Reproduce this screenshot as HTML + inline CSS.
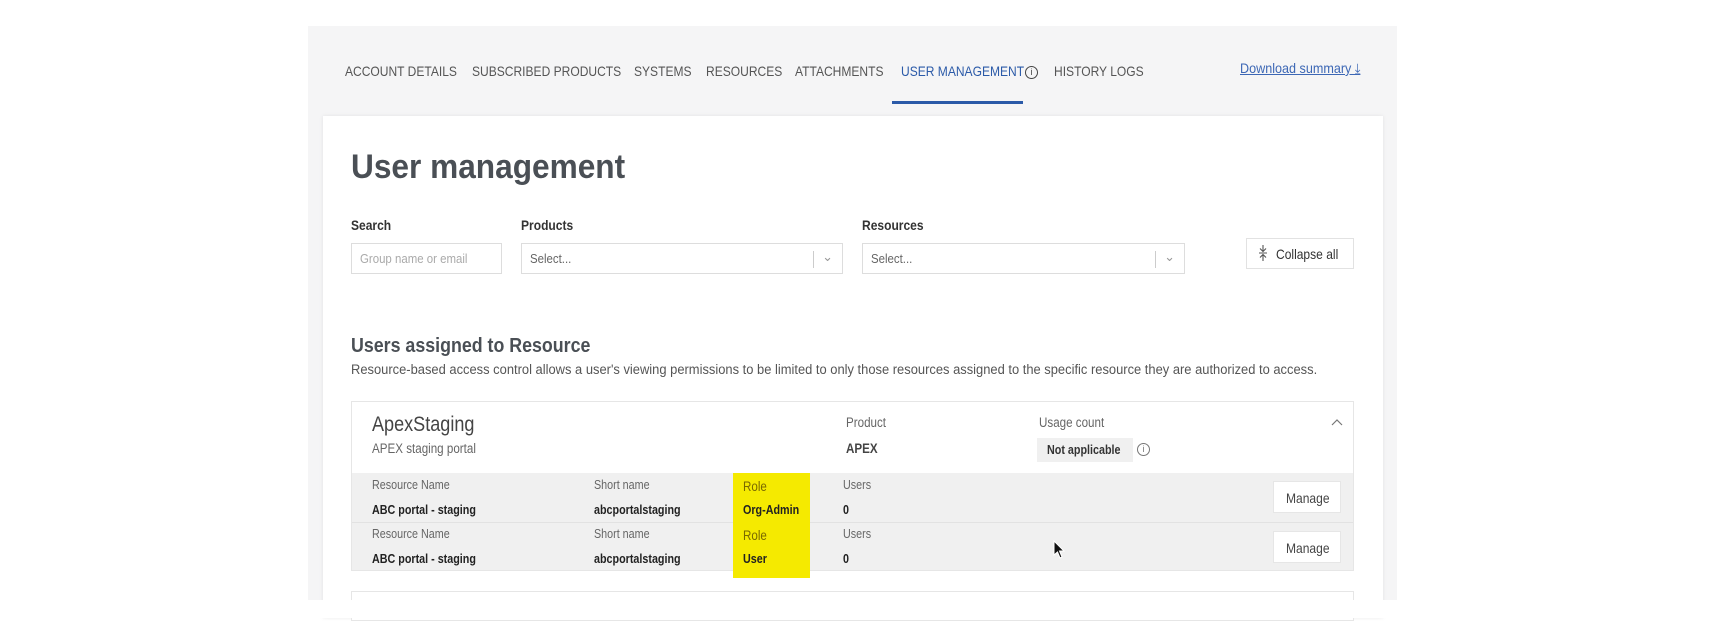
<!DOCTYPE html>
<html><head><meta charset="utf-8"><style>
*{margin:0;padding:0;box-sizing:border-box}
body{width:1716px;height:618px;background:#fff;font-family:"Liberation Sans",sans-serif;color:#333;position:relative;overflow:hidden}
.a{position:absolute;white-space:nowrap}
.n{transform:scaleX(.86);transform-origin:0 0}
.panel{left:308px;top:26px;width:1089px;height:574px;background:#f5f5f6}
.tab{top:63px;font-size:14px;color:#555}
.card{left:323px;top:116px;width:1060px;height:502px;background:#fff;box-shadow:0 0 4px rgba(0,0,0,.08)}
.lbl{font-size:14px;font-weight:bold;color:#333;top:217px}
.inp{top:243px;height:31px;border:1px solid #ddd;background:#fff;font-size:13px;color:#666}
.inp .t{position:absolute;left:8px;top:7px;transform:scaleX(.88);transform-origin:0 0}
.sm{font-size:12.5px;color:#666}
.v{font-size:12.5px;font-weight:bold;color:#222}
</style></head><body>
<div class="a panel"></div>
<div class="a tab n" style="left:345px">ACCOUNT DETAILS</div>
<div class="a tab n" style="left:472px">SUBSCRIBED PRODUCTS</div>
<div class="a tab n" style="left:634px">SYSTEMS</div>
<div class="a tab n" style="left:706px">RESOURCES</div>
<div class="a tab n" style="left:795px">ATTACHMENTS</div>
<div class="a tab n" style="left:901px;color:#2b5aa8">USER MANAGEMENT</div>
<div class="a" style="left:1025px;top:66px;width:13px;height:13px;border:1px solid #444;border-radius:50%;font-size:9px;text-align:center;line-height:11px;color:#444">i</div>
<div class="a tab n" style="left:1054px">HISTORY LOGS</div>
<div class="a" style="left:892px;top:101px;width:131px;height:3px;background:#2b5aa8"></div>
<div class="a n" style="left:1240px;top:60px;font-size:14px;color:#3c67b5;text-decoration:underline;transform:scaleX(.9)">Download summary ⤓</div>
<div class="a card"></div>
<div class="a n" style="left:351px;top:148px;font-size:34px;font-weight:bold;color:#4a4f55;transform:scaleX(.93)">User management</div>
<div class="a lbl n" style="left:351px">Search</div>
<div class="a lbl n" style="left:521px">Products</div>
<div class="a lbl n" style="left:862px">Resources</div>
<div class="a inp" style="left:351px;width:151px;color:#aaa"><span class="t">Group name or email</span></div>
<div class="a inp" style="left:521px;width:322px"><span class="t">Select...</span><span class="a" style="right:28px;top:7px;height:17px;border-left:1px solid #ccc"></span><span class="a" style="right:9px;top:5px;color:#999">⌄</span></div>
<div class="a inp" style="left:862px;width:323px"><span class="t">Select...</span><span class="a" style="right:28px;top:7px;height:17px;border-left:1px solid #ccc"></span><span class="a" style="right:9px;top:5px;color:#999">⌄</span></div>
<div class="a" style="left:1246px;top:238px;width:108px;height:31px;border:1px solid #e2e2e2;background:#fff"></div>
<svg class="a" style="left:1258px;top:245px" width="10" height="16" viewBox="0 0 10 16"><path d="M5 0V6M2 3.5L5 6.5 8 3.5M1 8H9M5 16V10M2 12.5L5 9.5 8 12.5" stroke="#555" fill="none" stroke-width="1.1"/></svg>
<div class="a n" style="left:1276px;top:246px;font-size:14px;color:#333">Collapse all</div>
<div class="a n" style="left:351px;top:335px;font-size:20px;font-weight:bold;color:#4a4f55;transform:scaleX(.89)">Users assigned to Resource</div>
<div class="a n" style="left:351px;top:362px;font-size:13.5px;color:#555;transform:scaleX(.957)">Resource-based access control allows a user's viewing permissions to be limited to only those resources assigned to the specific resource they are authorized to access.</div>
<div class="a" style="left:351px;top:401px;width:1003px;height:170px;border:1px solid #e6e6e6;background:#fff"></div>
<div class="a n" style="left:372px;top:413px;font-size:21px;color:#444">ApexStaging</div>
<div class="a n" style="left:372px;top:441px;font-size:13.5px;color:#666">APEX staging portal</div>
<div class="a n" style="left:846px;top:415px;font-size:13.5px;color:#666">Product</div>
<div class="a n" style="left:846px;top:441px;font-size:13.5px;font-weight:bold;color:#444">APEX</div>
<div class="a n" style="left:1039px;top:415px;font-size:13.5px;color:#666">Usage count</div>
<div class="a" style="left:1037px;top:438px;width:96px;height:24px;background:#f0f0f0"></div>
<div class="a n" style="left:1047px;top:443px;font-size:12.5px;font-weight:bold;color:#333">Not applicable</div>
<div class="a" style="left:1137px;top:443px;width:13px;height:13px;border:1px solid #777;border-radius:50%;font-size:9px;text-align:center;line-height:11px;color:#777">i</div>
<svg class="a" style="left:1331px;top:418px" width="12" height="8" viewBox="0 0 12 8"><path d="M1 7L6 2 11 7" stroke="#777" fill="none" stroke-width="1.2"/></svg>
<div class="a" style="left:352px;top:473px;width:1001px;height:97px;background:#f0f0f0"></div>
<div class="a" style="left:352px;top:522px;width:1001px;height:1px;background:#e2e2e2"></div>
<div class="a" style="left:733px;top:473px;width:77px;height:105px;background:#f5ea00"></div>
<div class="a sm n" style="left:372px;top:478px">Resource Name</div>
<div class="a sm n" style="left:594px;top:478px">Short name</div>
<div class="a sm n" style="left:743px;top:479px;color:#7a6a00;font-size:13.5px">Role</div>
<div class="a sm n" style="left:843px;top:478px">Users</div>
<div class="a v n" style="left:372px;top:503px">ABC portal - staging</div>
<div class="a v n" style="left:594px;top:503px">abcportalstaging</div>
<div class="a v n" style="left:743px;top:503px">Org-Admin</div>
<div class="a v n" style="left:843px;top:503px">0</div>
<div class="a sm n" style="left:372px;top:527px">Resource Name</div>
<div class="a sm n" style="left:594px;top:527px">Short name</div>
<div class="a sm n" style="left:743px;top:528px;color:#7a6a00;font-size:13.5px">Role</div>
<div class="a sm n" style="left:843px;top:527px">Users</div>
<div class="a v n" style="left:372px;top:552px">ABC portal - staging</div>
<div class="a v n" style="left:594px;top:552px">abcportalstaging</div>
<div class="a v n" style="left:743px;top:552px">User</div>
<div class="a v n" style="left:843px;top:552px">0</div>
<div class="a" style="left:1273px;top:481px;width:68px;height:32px;background:#fff;border:1px solid #e6e6e6"></div>
<div class="a n" style="left:1286px;top:490px;font-size:14px;color:#444">Manage</div>
<div class="a" style="left:1273px;top:531px;width:68px;height:32px;background:#fff;border:1px solid #e6e6e6"></div>
<div class="a n" style="left:1286px;top:540px;font-size:14px;color:#444">Manage</div>
<svg class="a" style="left:1053px;top:540px" width="14" height="20" viewBox="0 0 14 20"><path d="M1 1 L1 15 L4.5 12 L7 18 L9 17 L6.5 11 L11 11 Z" fill="#111" stroke="#fff" stroke-width="1"/></svg>
<div class="a" style="left:351px;top:591px;width:1003px;height:30px;border:1px solid #e6e6e6;background:#fff"></div>
<div class="a" style="left:0;top:600px;width:1716px;height:18px;background:#fff"></div>
</body></html>
